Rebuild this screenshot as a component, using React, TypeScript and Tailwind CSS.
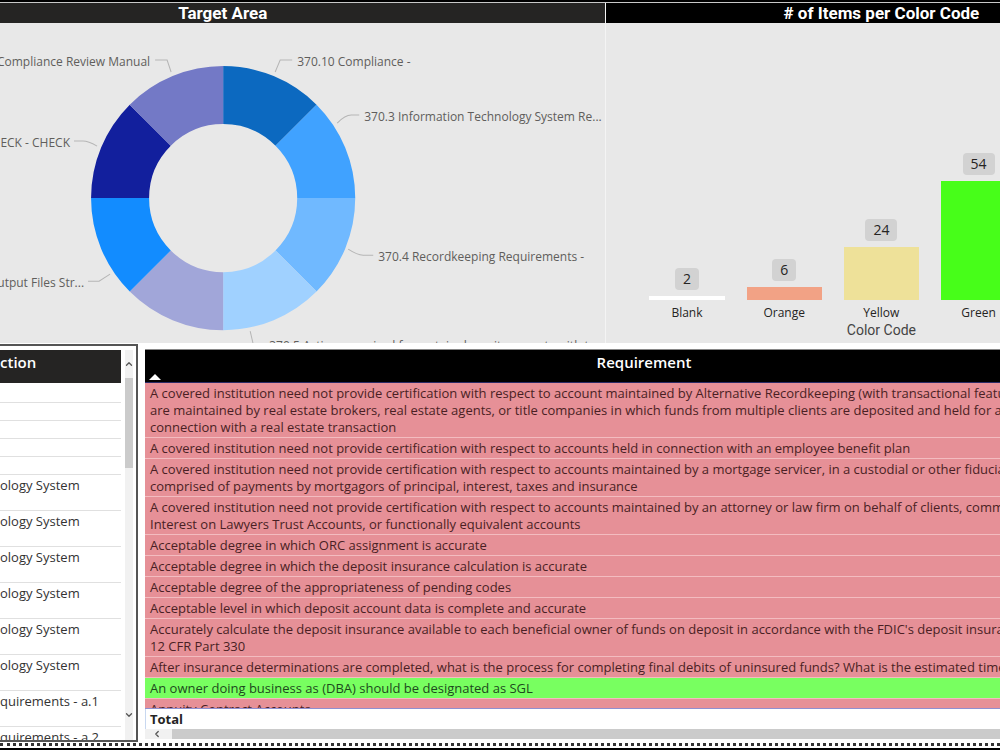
import { ChevronDown, ChevronLeft, ChevronUp } from 'lucide-react'

interface Slice {
  id: string
  color: string
}

interface SliceLabel {
  text: string
  x: number
  y: number
  anchor: 'start' | 'end'
  leader: string
}

interface Bar {
  label: string
  value: number
  color: string
}

interface Requirement {
  lines: string[]
  green?: boolean
}

const CX = 223
const CY = 175
const OUTER = 132
const INNER = 74

const slices: Slice[] = [
  { id: 'compliance', color: '#0c69c0' },
  { id: 'technology', color: '#40a2ff' },
  { id: 'recordkeeping', color: '#70b9ff' },
  { id: 'actions', color: '#a0d1ff' },
  { id: 'other', color: '#a1a6d9' },
  { id: 'output', color: '#128cff' },
  { id: 'check', color: '#121f9d' },
  { id: 'manual', color: '#7379c6' }
]

const sliceLabels: SliceLabel[] = [
  { text: '370.10 Compliance -', x: 297, y: 43, anchor: 'start', leader: 'M275 49L280 37H292' },
  { text: '370.3 Information Technology System Re...', x: 364, y: 98, anchor: 'start', leader: 'M337 100Q345 92 351 92H359' },
  { text: '370.4 Recordkeeping Requirements -', x: 378, y: 238, anchor: 'start', leader: 'M348 226Q357 232 363 232H373' },
  { text: '370.5 Actions required for certain deposit accounts with t...', x: 269, y: 327, anchor: 'start', leader: 'M250 308L254 325' },
  { text: 'utput Files Str...', x: 84, y: 264, anchor: 'end', leader: 'M110 251L99 258H88' },
  { text: 'ECK - CHECK', x: 70, y: 124, anchor: 'end', leader: 'M97 123Q88 118 83 118H74' },
  { text: 'Compliance Review Manual', x: 150, y: 43, anchor: 'end', leader: 'M171 49L167 37H155' }
]

const bars: Bar[] = [
  { label: 'Blank', value: 2, color: '#ffffff' },
  { label: 'Orange', value: 6, color: '#f2a285' },
  { label: 'Yellow', value: 24, color: '#eee199' },
  { label: 'Green', value: 54, color: '#47fe19' }
]

const sections = [
  'ology System',
  'ology System',
  'ology System',
  'ology System',
  'ology System',
  'ology System',
  'quirements - a.1',
  'quirements - a.2'
]

const requirements: Requirement[] = [
  {
    lines: [
      'A covered institution need not provide certification with respect to account maintained by Alternative Recordkeeping (with transactional features) that',
      'are maintained by real estate brokers, real estate agents, or title companies in which funds from multiple clients are deposited and held for a short time in',
      'connection with a real estate transaction'
    ]
  },
  { lines: ['A covered institution need not provide certification with respect to accounts held in connection with an employee benefit plan'] },
  {
    lines: [
      'A covered institution need not provide certification with respect to accounts maintained by a mortgage servicer, in a custodial or other fiduciary capacity,',
      'comprised of payments by mortgagors of principal, interest, taxes and insurance'
    ]
  },
  {
    lines: [
      'A covered institution need not provide certification with respect to accounts maintained by an attorney or law firm on behalf of clients, commonly known as',
      'Interest on Lawyers Trust Accounts, or functionally equivalent accounts'
    ]
  },
  { lines: ['Acceptable degree in which ORC assignment is accurate'] },
  { lines: ['Acceptable degree in which the deposit insurance calculation is accurate'] },
  { lines: ['Acceptable degree of the appropriateness of pending codes'] },
  { lines: ['Acceptable level in which deposit account data is complete and accurate'] },
  {
    lines: [
      "Accurately calculate the deposit insurance available to each beneficial owner of funds on deposit in accordance with the FDIC's deposit insurance rules at",
      '12 CFR Part 330'
    ]
  },
  { lines: ['After insurance determinations are completed, what is the process for completing final debits of uninsured funds? What is the estimated time'] },
  { lines: ['An owner doing business as (DBA) should be designated as SGL'], green: true },
  { lines: ['Annuity Contract Accounts'] }
]

function slicePath(index: number) {
  const step = (Math.PI * 2) / slices.length
  const a = index * step
  const b = a + step
  const point = (r: number, t: number) => `${CX + r * Math.sin(t)} ${CY - r * Math.cos(t)}`
  return `M${point(OUTER, a)}A${OUTER} ${OUTER} 0 0 1 ${point(OUTER, b)}L${point(INNER, b)}A${INNER} ${INNER} 0 0 0 ${point(INNER, a)}Z`
}

function TargetArea() {
  return (
    <section className="flex-[606] min-w-0 overflow-hidden border-r border-[#f4f4f4]">
      <h2 className="h-5 bg-[#252423] pr-40 text-center font-[Roboto,sans-serif] text-[17px] leading-5 font-bold text-white">
        Target Area
      </h2>
      <svg viewBox="0 0 605 320" preserveAspectRatio="xMinYMin slice" className="block h-80 w-full" role="img" aria-label="Target Area">
        {slices.map((slice, i) => (
          <path key={slice.id} d={slicePath(i)} fill={slice.color} />
        ))}
        {sliceLabels.map((label) => (
          <g key={label.text}>
            <path d={label.leader} fill="none" stroke="#b5b5b5" />
            <text x={label.x} y={label.y} textAnchor={label.anchor} className="fill-[#605e5c] text-[12px]">
              {label.text}
            </text>
          </g>
        ))}
      </svg>
    </section>
  )
}

function ColorCodeChart() {
  return (
    <section className="flex-[394] min-w-0 overflow-hidden bg-[#e8e8e8]">
      <div className="w-[550px]">
        <h2 className="h-5 bg-black text-center font-[Roboto,sans-serif] text-[17px] leading-5 font-bold text-white"># of Items per Color Code</h2>
        <div className="grid h-[277px] grid-cols-5 items-end px-8">
          {bars.map((bar) => (
            <div key={bar.label} className="flex flex-col items-center px-[11px]">
              <span className="mb-1.5 rounded bg-[#d2d2d2] px-2 text-[14px] leading-[22px] text-[#252423]">{bar.value}</span>
              <div className="w-full" style={{ height: Math.round(bar.value * 2.2), backgroundColor: bar.color }} />
            </div>
          ))}
        </div>
        <div className="grid grid-cols-5 px-8 pt-1 text-center text-[12px] leading-[17px] text-[#252423]">
          {bars.map((bar) => (
            <span key={bar.label}>{bar.label}</span>
          ))}
        </div>
        <p className="text-center font-[Roboto,sans-serif] text-[14px] leading-[18px] text-[#444]">Color Code</p>
      </div>
    </section>
  )
}

function SectionTable() {
  return (
    <section className="flex w-[138px] shrink-0 overflow-hidden border-t-2 border-r-2 border-b-2 border-[#555] pt-1">
      <div className="flex-1 overflow-hidden">
        <table className="w-full border-collapse text-[13px] leading-[18px] whitespace-nowrap text-[#333]">
          <thead>
            <tr>
              <th className="h-[34px] border-b-2 border-white bg-[#252423] text-left align-top text-[15px] leading-6 font-semibold text-white">ction</th>
            </tr>
          </thead>
          <tbody>
            {[1, 2, 3, 4, 5].map((n) => (
              <tr key={n}>
                <td className="h-[18px] border-b border-[#e0e0e0]" />
              </tr>
            ))}
            {sections.map((name, i) => (
              <tr key={i}>
                <td className="h-9 border-b border-[#e0e0e0] pt-px align-top">{name}</td>
              </tr>
            ))}
          </tbody>
        </table>
      </div>
      <div className="mr-[3px] ml-1 flex w-2 flex-col items-center bg-[#f1f1f1] pt-2 pb-5">
        <button aria-label="Scroll up" className="mb-2 h-3">
          <ChevronUp size={10} strokeWidth={3} className="text-[#555]" />
        </button>
        <div className="h-[90px] w-full shrink-0 bg-[#cbcbcb]" />
        <button aria-label="Scroll down" className="mt-auto">
          <ChevronDown size={10} strokeWidth={3} className="text-[#555]" />
        </button>
      </div>
    </section>
  )
}

function RequirementTable() {
  return (
    <section className="flex min-w-0 flex-1 flex-col overflow-hidden pt-[5px] pb-[3px]">
      <div className="min-h-0 flex-1 overflow-hidden border-t border-b border-t-[#888] border-b-[#8f8fd0]">
        <table className="w-[998px] border-separate border-spacing-0 text-[13px] leading-[17px] whitespace-nowrap text-[#4a1f24]">
          <thead>
            <tr>
              <th className="relative h-[33px] border-b border-[#2a2a66] bg-black align-top text-[15px] leading-6 font-semibold text-white">
                Requirement
                <svg viewBox="0 0 12 6" className="absolute bottom-0.5 left-1 h-1.5 w-3" aria-hidden="true">
                  <path d="M0 6L6 0L12 6Z" fill="#fff" />
                </svg>
              </th>
            </tr>
          </thead>
          <tbody>
            {requirements.map((row) => (
              <tr key={row.lines[0]} className={row.green ? 'bg-[#78ff60] text-[#1d4a1d]' : 'bg-[#e69097]'}>
                <td className="border-b border-[#f3bcc0] px-[5px] pt-0.5 pb-px">
                  {row.lines.map((line) => (
                    <div key={line}>{line}</div>
                  ))}
                </td>
              </tr>
            ))}
          </tbody>
        </table>
      </div>
      <p className="border-l border-[#c8d8f0] pl-1 text-[13px] leading-5 font-bold text-[#252423]">Total</p>
      <div className="flex h-2.5 bg-[#f1f1f1]">
        <button aria-label="Scroll left" className="flex w-[27px] items-center justify-center pr-1">
          <ChevronLeft size={10} strokeWidth={3} className="text-[#555]" />
        </button>
        <div className="flex-1 bg-[#cbcbcb]" />
      </div>
    </section>
  )
}

export default function App() {
  return (
    <main className="flex h-screen flex-col overflow-hidden border-t-2 border-b-2 border-black bg-white font-['Open_Sans','Noto_Sans',sans-serif]">
      <div className="flex border-t border-[#c8c8c8] bg-[#e8e8e8]">
        <TargetArea />
        <ColorCodeChart />
      </div>
      <div className="flex min-h-0 flex-1 gap-[7px] pt-px">
        <SectionTable />
        <RequirementTable />
      </div>
      <div className="mt-px mb-0.5 border-t-[3px] border-dotted border-[#333]" />
    </main>
  )
}
